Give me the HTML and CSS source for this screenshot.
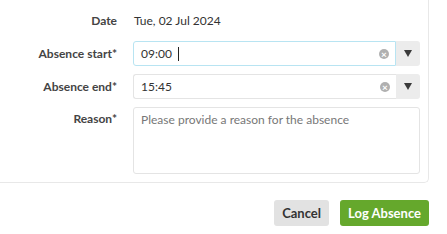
FILE: index.html
```html
<!DOCTYPE html>
<html lang="en">
<head>
  <meta charset="UTF-8">
  <title>Log Absence</title>
  <link rel="stylesheet" href="styles.css">
</head>
<body>
  <div class="panel">
    <form class="absence-form">
      <div class="row">
        <label class="label">Date</label>
        <div class="value">Tue, 02 Jul 2024</div>
      </div>
      <div class="row">
        <label class="label">Absence start*</label>
        <div class="field">
          <div class="time-input focused">
            <span>09:00</span><span class="caret"></span>
            <span class="clear">&times;</span>
          </div>
          <div class="drop"><span class="tri"></span></div>
        </div>
      </div>
      <div class="row">
        <label class="label">Absence end*</label>
        <div class="field">
          <div class="time-input">
            <span>15:45</span>
            <span class="clear">&times;</span>
          </div>
          <div class="drop"><span class="tri"></span></div>
        </div>
      </div>
      <div class="row row-top">
        <label class="label">Reason*</label>
        <div class="reason">Please provide a reason for the absence</div>
      </div>
    </form>
  </div>
  <div class="actions">
    <button class="btn btn-cancel">Cancel</button>
    <button class="btn btn-log">Log Absence</button>
  </div>
</body>
</html>
```

FILE: styles.css
```css
body {
  margin: 0;
  padding: 0;
  font-family: Lato, "Open Sans", Arial, sans-serif;
  font-size: 12px;
  color: #333;
  background: #fff;
}
.panel {
  width: 428px;
  height: 182px;
  border-right: 1px solid #e8e8e8;
  border-bottom: 1px solid #e8e8e8;
  border-bottom-right-radius: 5px;
  box-sizing: content-box;
}
.absence-form {
  display: flex;
  flex-direction: column;
  gap: 8px;
  padding-top: 8px;
}
.row {
  display: grid;
  grid-template-columns: 117px 287px;
  column-gap: 16px;
  align-items: center;
  min-height: 25px;
}
.row-top {
  align-items: start;
}
.row-top .label {
  padding-top: 4px;
}
.label {
  text-align: right;
  font-weight: bold;
  color: #444;
}
.value {
  padding-left: 1px;
}
.field {
  display: flex;
  height: 25px;
}
.time-input {
  flex: 1;
  display: flex;
  align-items: center;
  padding-left: 7px;
  border: 1px solid #e4e4e4;
  border-right: none;
  border-radius: 3px 0 0 3px;
}
.time-input.focused {
  border-color: #b8e4f2;
  border-right: 1px solid #b8e4f2;
}
.caret {
  width: 1px;
  height: 14px;
  background: #222;
  margin-left: 6px;
}
.clear {
  margin-left: auto;
  margin-right: 6px;
  width: 10px;
  height: 10px;
  border-radius: 50%;
  background: #b0b0b0;
  color: #fff;
  font-size: 10px;
  line-height: 10px;
  text-align: center;
  font-weight: bold;
}
.drop {
  width: 24px;
  background: #ececec;
  border-radius: 0 3px 3px 0;
  display: flex;
  align-items: center;
  justify-content: center;
}
.tri {
  width: 0;
  height: 0;
  border-left: 4.5px solid transparent;
  border-right: 4.5px solid transparent;
  border-top: 7px solid #3a3a3a;
}
.reason {
  height: 67px;
  box-sizing: border-box;
  border: 1px solid #e4e4e4;
  border-radius: 3px;
  padding: 4px 7px;
  color: #777;
}
.actions {
  display: flex;
  justify-content: flex-end;
  gap: 11px;
  width: 429px;
  margin-top: 17px;
}
.btn {
  height: 26px;
  border: none;
  border-radius: 3px;
  font-family: inherit;
  font-size: 13px;
  font-weight: bold;
  padding: 0 8px;
  cursor: pointer;
}
.btn-cancel {
  background: #e2e2e2;
  color: #333;
  min-width: 55px;
}
.btn-log {
  background: #65a82c;
  color: #fff;
}
```
